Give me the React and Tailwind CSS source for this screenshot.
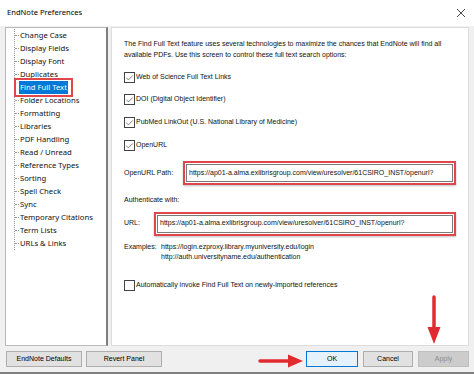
import { Check } from 'lucide-react'

const treeItems = [
  'Change Case',
  'Display Fields',
  'Display Font',
  'Duplicates',
  'Find Full Text',
  'Folder Locations',
  'Formatting',
  'Libraries',
  'PDF Handling',
  'Read / Unread',
  'Reference Types',
  'Sorting',
  'Spell Check',
  'Sync',
  'Temporary Citations',
  'Term Lists',
  'URLs & Links'
]

const url = 'https://ap01-a.alma.exlibrisgroup.com/view/uresolver/61CSIRO_INST/openurl?'

function Box({ checked }) {
  return (
    <div className="w-[11px] h-[11px] border border-[#444] bg-white flex items-center justify-center shrink-0">
      {checked && <Check size={10} strokeWidth={1.5} className="text-[#222]" />}
    </div>
  )
}

function CheckRow({ checked, label, className }) {
  return (
    <div className={`flex items-center gap-[1px] ${className}`}>
      <Box checked={checked} />
      <span>{label}</span>
    </div>
  )
}

function UrlField({ width }) {
  return (
    <div className={`border-2 border-[#e0464b] p-[1px] shadow-[0_1px_2px_rgba(0,0,0,0.25)] ${width}`}>
      <div className="h-[18px] border border-[#7a7a7a] bg-white flex items-center px-[2px] text-[#111]">
        {url}
      </div>
    </div>
  )
}

function Btn({ children, variant }) {
  const styles = {
    normal: 'bg-[#e1e1e1] border-[#adadad] text-black',
    focus: 'bg-[#e5f1fb] border-[#0078d7] text-black',
    disabled: 'bg-[#cccccc] border-[#bfbfbf] text-[#8c8c8c]'
  }
  return (
    <div className={`h-[16px] border flex items-center justify-center ${styles[variant || 'normal']}`}>
      {children}
    </div>
  )
}

export default function App() {
  return (
    <div
      className="w-[474px] h-[374px] bg-[#f0f0f0] flex flex-col relative overflow-hidden"
      style={{ fontFamily: '"Liberation Sans", Arial, sans-serif' }}
    >
      {/* title bar */}
      <div className="h-[26px] bg-white flex items-center justify-between pl-[7px] pr-[8px] text-black">
        <span style={{ fontFamily: '"Noto Sans", sans-serif', fontSize: '7.6px' }}>EndNote Preferences</span>
        <svg width="10" height="10" viewBox="0 0 10 10">
          <path d="M1 1 L9 9 M9 1 L1 9" stroke="#333" strokeWidth="0.9" />
        </svg>
      </div>

      <div className="flex gap-[3px] pl-[5px] pr-[5px] pt-[1px] h-[320px]">
        {/* left tree */}
        <div
          className="w-[103px] h-[319px] bg-white border border-[#b9b9b9] border-r-[#7d7d7d] border-r-2 pt-[1px] pl-[7px] text-[#111]"
          style={{ fontFamily: '"Noto Sans", sans-serif', fontSize: '7.7px' }}
        >
          <div className="border-l border-dotted border-[#9a9a9a] ml-[1px]">
            {treeItems.map((item) => {
              const selected = item === 'Find Full Text'
              return (
                <div key={item} className="h-[13px] flex items-center">
                  <div className="w-[4px] border-t border-dotted border-[#9a9a9a] shrink-0" />
                  {selected ? (
                    <div className="border-2 border-[#e0464b] -ml-[5px] px-[3px] py-[1px] relative bg-white">
                      <span className="bg-[#0078d7] text-white px-[1px] leading-[13px] block">{item}</span>
                    </div>
                  ) : (
                    <span className="pl-[1px] leading-[13px]">{item}</span>
                  )}
                </div>
              )
            })}
          </div>
        </div>

        {/* right content */}
        <div className="flex-1 h-[319px] bg-white border border-[#dcdcdc] pl-[12px] pt-[10px] text-[7px] text-[#111]">
          <p className="leading-[11px] w-[340px]">
            The Find Full Text feature uses several technologies to maximize the chances that EndNote will find all available PDFs. Use this screen to control these full text search options:
          </p>
          <CheckRow checked label="Web of Science Full Text Links" className="mt-[12px]" />
          <CheckRow checked label="DOI (Digital Object Identifier)" className="mt-[11px]" />
          <CheckRow checked label="PubMed LinkOut (U.S. National Library of Medicine)" className="mt-[12px]" />
          <CheckRow checked label="OpenURL" className="mt-[12px]" />

          <div className="flex items-center mt-[10px]">
            <span className="w-[59px] shrink-0">OpenURL Path:</span>
            <UrlField width="w-[273px]" />
          </div>

          <div className="mt-[10px]">Authenticate with:</div>

          <div className="flex items-center mt-[6px]">
            <span className="w-[30px] shrink-0">URL:</span>
            <UrlField width="w-[302px]" />
          </div>

          <div className="flex mt-[6px] leading-[10px]">
            <span className="w-[37px] shrink-0">Examples:</span>
            <div>
              <div>https://login.ezproxy.library.myuniversity.edu/login</div>
              <div>http://auth.universityname.edu/authentication</div>
            </div>
          </div>

          <CheckRow label="Automatically invoke Find Full Text on newly-imported references" className="mt-[18px]" />
        </div>
      </div>

      {/* buttons */}
      <div className="flex items-center pl-[6px] pr-[5px] mt-[5px] text-[7px]">
        <div className="w-[76px]"><Btn>EndNote Defaults</Btn></div>
        <div className="w-[76px] ml-[4px]"><Btn>Revert Panel</Btn></div>
        <div className="flex-1" />
        <div className="w-[52px]"><Btn variant="focus">OK</Btn></div>
        <div className="w-[50px] ml-[5px]"><Btn>Cancel</Btn></div>
        <div className="w-[51px] ml-[5px]"><Btn variant="disabled">Apply</Btn></div>
      </div>

      <div className="flex-1" />
      <div className="h-[2px] bg-[#7f7f7f]" />

      {/* annotation arrows */}
      <svg className="absolute left-[258px] top-[353px]" width="48" height="16" viewBox="0 0 48 16">
        <path d="M2 8 L32 8" stroke="#e02b2f" strokeWidth="3.5" strokeLinecap="round" />
        <path d="M30 1.5 L45 8 L30 14.5 Z" fill="#e02b2f" />
      </svg>
      <svg className="absolute left-[426px] top-[294px]" width="16" height="52" viewBox="0 0 16 52">
        <path d="M8 3 L8 36" stroke="#e02b2f" strokeWidth="3.5" strokeLinecap="round" />
        <path d="M1.5 33 L8 50 L14.5 33 Z" fill="#e02b2f" />
      </svg>
    </div>
  )
}
